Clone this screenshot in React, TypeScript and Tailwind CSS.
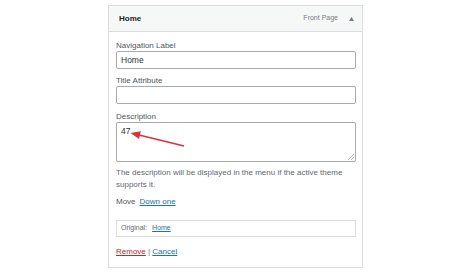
import React from "react";

export default function App() {
  return (
    <div
      className="w-[474px] h-[274px] bg-white relative overflow-hidden"
      style={{ fontFamily: '"Liberation Sans", Arial, sans-serif' }}
    >
      <div className="ml-[108px] mt-[5px] w-[255px] h-[263px] border border-[#dcdcde] bg-white flex flex-col">
        <div className="h-[26px] bg-[#f6f7f7] border-b border-[#dcdcde] flex items-center pl-[10px] pr-[8px]">
          <span className="text-[8px] font-bold text-[#1d2327]">Home</span>
          <span className="ml-auto text-[7px] text-[#787c82]">Front Page</span>
          <svg width="5" height="4" viewBox="0 0 5 4" className="ml-[11px]">
            <polygon points="0,4 5,4 2.5,0" fill="#787c82" />
          </svg>
        </div>
        <div className="pl-[7px] pr-[6px] pt-[8px] text-[8px] text-[#50575e]">
          <div className="leading-[11px] h-[11px]">Navigation Label</div>
          <div className="h-[18px] border border-[#a7aaad] rounded-[2px] flex items-center px-[4px] text-[8.5px] text-[#2c3338]">
            Home
          </div>
          <div className="mt-[6px] leading-[11px] h-[11px]">Title Attribute</div>
          <div className="h-[18px] border border-[#a7aaad] rounded-[2px]" />
          <div className="mt-[7px] leading-[11px] h-[11px]">Description</div>
          <div className="relative h-[40px] border border-[#a7aaad] rounded-[2px] px-[4px] pt-[2px] text-[8.5px] text-[#2c3338] leading-[12px]">
            47
            <svg
              className="absolute left-0 top-0"
              width="80"
              height="30"
              viewBox="0 0 80 30"
            >
              <line x1="67" y1="23" x2="22" y2="12" stroke="#d63638" strokeWidth="1.8" />
              <polygon points="13.5,10 23.8,8.3 22,16" fill="#d63638" />
            </svg>
            <svg className="absolute right-[1px] bottom-[1px]" width="6" height="6" viewBox="0 0 6 6">
              <line x1="0" y1="6" x2="6" y2="0" stroke="#a7aaad" strokeWidth="0.8" />
              <line x1="3" y1="6" x2="6" y2="3" stroke="#a7aaad" strokeWidth="0.8" />
            </svg>
          </div>
          <p className="mt-[5px] leading-[12px] text-[#646970]">
            The description will be displayed in the menu if the active theme supports it.
          </p>
          <div className="mt-[5px] leading-[12px] flex gap-[4px]">
            <span>Move</span>
            <span className="text-[#2271b1] underline">Down one</span>
          </div>
          <div className="mt-[12px] h-[17px] border border-[#dcdcde] flex items-center px-[4px] text-[7px] text-[#646970] gap-[5px]">
            <span>Original:</span>
            <span className="text-[#2271b1] underline">Home</span>
          </div>
          <div className="mt-[9px] leading-[12px]">
            <span className="text-[#b32d2e] underline">Remove</span>
            <span className="text-[#787c82]"> | </span>
            <span className="text-[#2271b1] underline">Cancel</span>
          </div>
        </div>
      </div>
    </div>
  );
}
